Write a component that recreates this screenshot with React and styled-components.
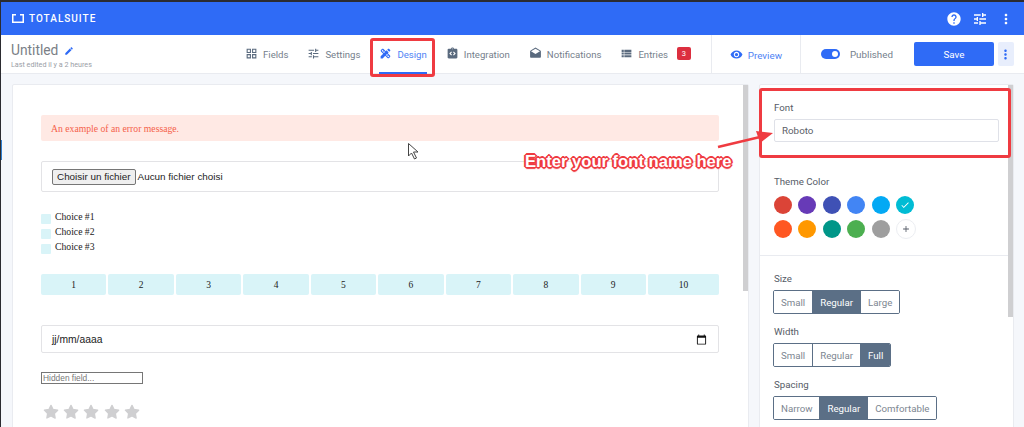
import React from "react";
import styled, { createGlobalStyle } from "styled-components";
import {
  MdOutlineGridView, MdTune, MdDesignServices, MdIntegrationInstructions, MdDrafts,
  MdViewList, MdVisibility, MdEdit, MdHelp, MdMoreVert, MdCheck, MdAdd, MdCalendarToday,
} from "react-icons/md";

const Global = createGlobalStyle`
  html, body { margin: 0; padding: 0; background: #f5f7fa; }
  * { box-sizing: border-box; }
  body { font-family: Roboto, "Liberation Sans", sans-serif; }
`;

const Page = styled.div`
  position: relative; width: 1024px; height: 427px; overflow: hidden;
  display: flex; flex-direction: column; background: #f5f7fb;
  border-top: 2px solid #2b2b30; border-left: 1px solid #2b2b30;
`;
const Header = styled.header`
  height: 33px; flex: none; background: #2f6bf6; color: #fff;
  display: flex; align-items: center; justify-content: space-between; padding: 0 10px 0 11px;
`;
const Logo = styled.div`
  display: flex; align-items: center; gap: 5px; font-size: 10px; font-weight: 500; letter-spacing: 1px;
`;
const HeaderIcons = styled.div`
  display: flex; align-items: center; gap: 10px; font-size: 16px; svg { display: block; }
`;
const Toolbar = styled.div`
  height: 39px; flex: none; background: #fff; border-bottom: 1px solid #e9ebf0; display: flex; align-items: stretch;
`;
const TitleBlock = styled.div`
  width: 244px; padding: 7px 0 0 10px; flex: none;
`;
const Title = styled.div`
  display: flex; align-items: center; gap: 6px; color: #7b7f86; font-size: 13.8px; line-height: 17px;
  svg { color: #2f6bf6; font-size: 10px; }
`;
const Sub = styled.div`
  color: #9a9ea6; font-size: 7.2px; line-height: 9px; margin-top: 1px;
`;
const Tabs = styled.nav`
  display: flex; align-items: stretch; gap: 19px; flex: none;
`;
const Tab = styled.div`
  display: flex; align-items: center; gap: 5px; font-size: 9.6px; height: 39px; padding: 2px 0 0;
  color: ${p => (p.$active ? "#4f83f5" : "#75808c")};
  border-bottom: 2px solid ${p => (p.$active ? "#2f6bf6" : "transparent")};
  svg { font-size: 13px; margin-bottom: 2px; color: ${p => (p.$active ? "#2f6bf6" : "#5a6a7e")}; }
`;
const Badge = styled.span`
  background: #dc2f3f; color: #fff; font-size: 7.5px; width: 14px; height: 13px; border-radius: 2px;
  display: flex; align-items: center; justify-content: center; margin-left: 4px; margin-bottom: 2px;
`;
const PreviewCell = styled.div`
  width: 90px; margin-left: 20px; flex: none; border-left: 1px solid #e9ebf0; border-right: 1px solid #e9ebf0;
  display: flex; align-items: center; justify-content: center; gap: 5px; color: #4f83f5; font-size: 9.8px; padding-top: 2px;
  svg { font-size: 13px; color: #2f6bf6; margin-bottom: 2px; }
`;
const PublishCell = styled.div`
  display: flex; align-items: center; padding-left: 20px; flex: none; gap: 10px; color: #75808c; font-size: 9.8px;
`;
const Toggle = styled.span`
  width: 19px; height: 10px; border-radius: 5px; background: #2f6bf6; position: relative; display: block;
  &::after { content: ""; position: absolute; right: 2px; top: 2px; width: 6px; height: 6px; border-radius: 50%; background: #fff; }
`;
const SaveBtn = styled.div`
  width: 80px; height: 24px; align-self: center; border-radius: 2px; background: #2f6bf6; color: #fff; font-size: 9.8px; margin-left: 21px; flex: none;
  display: flex; align-items: center; justify-content: center;
`;
const MoreBtn = styled.div`
  width: 16px; height: 24px; align-self: center; border-radius: 2px; background: #e8eefc; color: #2f6bf6; margin-left: 4px; flex: none;
  display: flex; align-items: center; justify-content: center; font-size: 15px;
`;
const Workspace = styled.div`
  flex: 1; min-height: 0; display: flex; padding: 10px 11px 0 11px; gap: 10px; align-items: flex-start;
`;
const Canvas = styled.main`
  position: relative; width: 737px; height: 360px; flex: none; background: #fff; border: 1px solid #e9ebf0; border-radius: 2px;
  padding: 30px 0 0 28px; font-family: "Liberation Serif", serif; color: #333;
`;
const ScrollThumb = styled.div`
  position: absolute; top: 0; right: ${p => p.$right}px; width: 5px; height: ${p => p.$h}px; background: #cfcfd1;
`;
const ErrorBox = styled.div`
  width: 678px; height: 26px; background: #ffe9e4; border-radius: 2px; color: #f5614a; font-size: 9.7px;
  display: flex; align-items: center; padding-left: 10px;
`;
const FileBox = styled.div`
  width: 678px; height: 31px; margin-top: 20px; border: 1px solid #e3e3e6; border-radius: 2px; display: flex; align-items: center;
  padding-left: 10px; gap: 2px; font-family: "Liberation Sans", sans-serif; font-size: 9.9px; color: #222;
`;
const FileButton = styled.span`
  border: 1px solid #767676; border-radius: 2px; background: #efefef; padding: 0 4px; height: 16px; display: flex; align-items: center; white-space: nowrap;
`;
const Choices = styled.div`
  margin-top: 18px; display: flex; flex-direction: column;
`;
const Choice = styled.div`
  display: flex; align-items: flex-start; gap: 4px; height: 15px; font-size: 9.7px; color: #222; line-height: 13px;
`;
const Check = styled.span`
  width: 10px; height: 10px; margin-top: 4px; background: #d9f4f8; border-radius: 1px; flex: none;
`;
const Scale = styled.div`
  display: flex; gap: 2px; width: 678px; margin-top: 19px;
`;
const ScaleItem = styled.div`
  flex: 1; height: 21px; background: #d9f4f8; border-radius: 2px; font-size: 9.5px; color: #222;
  display: flex; align-items: center; justify-content: center;
  &:last-child { flex: none; width: 71px; }
`;
const DateBox = styled.div`
  width: 678px; height: 28px; margin-top: 30px; border: 1px solid #e3e3e6; border-radius: 2px; display: flex; align-items: center;
  justify-content: space-between; padding: 0 11px 0 10px; font-family: "Liberation Sans", sans-serif; font-size: 10.3px; color: #222;
  svg { font-size: 11px; color: #111; }
`;
const HiddenField = styled.div`
  width: 102px; height: 12px; margin-top: 19px; border: 1px solid #767676; font-family: "Liberation Sans", sans-serif; font-size: 8.4px;
  color: #777; padding-left: 1px; line-height: 10px;
`;
const Stars = styled.div`
  display: flex; gap: 4.2px; margin-top: 20px; margin-left: 2px; color: #cfcfd1;
  svg { display: block; }
`;
const Sidebar = styled.aside`
  position: relative; width: 255px; height: 360px; flex: none; background: #fff; border: 1px solid #e9ebf0; border-radius: 2px; padding: 17px 14px 0;
  color: #555b66;
`;
const Label = styled.div`
  font-size: 9.7px; line-height: 12px; color: #555b66;
`;
const FontInput = styled.div`
  width: 225px; height: 23px; margin-top: 5px; border: 1px solid #dfe1e8; border-radius: 2px; font-size: 9.8px; color: #5c6068;
  display: flex; align-items: center; padding-left: 7px;
`;
const ThemeSection = styled.div`
  margin-top: 34px;
`;
const Swatches = styled.div`
  display: grid; grid-template-columns: repeat(6, 18px); column-gap: 6.4px; row-gap: 6px; margin-top: 8px;
`;
const Swatch = styled.div`
  width: 18px; height: 18px; border-radius: 50%; background: ${p => p.$c}; color: #fff; font-size: 10px;
  display: flex; align-items: center; justify-content: center;
`;
const AddSwatch = styled(Swatch)`
  width: 20px; height: 20px; margin-top: -1px; background: #fff; border: 1px solid #eceef2; color: #555b66; font-size: 10px;
`;
const Divider = styled.div`
  height: 1px; background: #e9ebf0; margin: 16px -14px 0;
`;
const Group = styled.div`
  margin-top: ${p => p.$mt}px;
`;
const Segments = styled.div`
  display: inline-flex; height: 24px; margin: 5px 0 0 -1px; border: 1px solid #5b6f86; border-radius: 2px; overflow: hidden; vertical-align: top;
`;
const Segment = styled.div`
  display: flex; align-items: center; padding: 0 7px; font-size: 9.7px;
  background: ${p => (p.$on ? "#5b6f86" : "#fff")}; color: ${p => (p.$on ? "#fff" : "#7d8691")};
  & + & { border-left: 1px solid #5b6f86; }
`;
const RedBox = styled.div`
  position: absolute; border: 3px solid #ef3b41; border-radius: 3px; pointer-events: none;
  left: ${p => p.$x}px; top: ${p => p.$y}px; width: ${p => p.$w}px; height: ${p => p.$h}px;
`;
const Callout = styled.div`
  position: absolute; left: 524px; top: 151px; font-family: "Liberation Sans", sans-serif; font-weight: 700; font-size: 16.6px; line-height: 18px; color: #fff; white-space: nowrap;
  text-shadow: -1px -1px 0 #ef3b41, 1px -1px 0 #ef3b41, -1px 1px 0 #ef3b41, 1px 1px 0 #ef3b41, 0 2px 1px #ef3b41, 2px 0 0 #ef3b41, -2px 0 0 #ef3b41, 0 -2px 0 #ef3b41;
`;
const Overlay = styled.svg`
  position: absolute; left: 0; top: 0; pointer-events: none;
`;
const EdgeMark = styled.div`
  position: absolute; left: 0; top: 138px; width: 1px; height: 20px; background: #2f7fd0;
`;

const colors = ["#db4437", "#673ab7", "#3f51b5", "#4285f4", "#03a9f4", "#00bcd4", "#ff5722", "#ff9800", "#009688", "#4caf50", "#9e9e9e"];
const stars = [0, 1, 2, 3, 4];
const nums = [1, 2, 3, 4, 5, 6, 7, 8, 9, 10];

const LogoMark = () => (
  <svg width="12" height="9" viewBox="0 0 12 9"><path d="M0 0h4v1.5H1.5v6h9v-6H8V0h4v9H0z" fill="#fff" /></svg>
);

const StarIcon = () => (
  <svg width="16" height="16" viewBox="0 0 24 24">
    <path
      d="M12 2l3.1 6.3 6.9 1-5 4.9 1.2 6.9L12 17.8 5.8 21l1.2-6.9-5-4.9 6.9-1z"
      fill="currentColor" stroke="currentColor" strokeWidth="2" strokeLinejoin="round"
    />
  </svg>
);

const SegmentGroup = ({ label, mt, items, on }) => (
  <Group $mt={mt}>
    <Label>{label}</Label>
    <Segments>
      {items.map((t) => <Segment key={t} $on={t === on}>{t}</Segment>)}
    </Segments>
  </Group>
);

export default function App() {
  return (
    <Page>
      <Global />
      <Header>
        <Logo><LogoMark />TOTALSUITE</Logo>
        <HeaderIcons><MdHelp /><MdTune /><MdMoreVert /></HeaderIcons>
      </Header>
      <Toolbar>
        <TitleBlock>
          <Title>Untitled <MdEdit /></Title>
          <Sub>Last edited il y a 2 heures</Sub>
        </TitleBlock>
        <Tabs>
          <Tab><MdOutlineGridView />Fields</Tab>
          <Tab><MdTune />Settings</Tab>
          <Tab $active><MdDesignServices />Design</Tab>
          <Tab><MdIntegrationInstructions />Integration</Tab>
          <Tab><MdDrafts />Notifications</Tab>
          <Tab><MdViewList />Entries<Badge>3</Badge></Tab>
        </Tabs>
        <PreviewCell><MdVisibility />Preview</PreviewCell>
        <PublishCell><Toggle />Published</PublishCell>
        <SaveBtn>Save</SaveBtn>
        <MoreBtn><MdMoreVert /></MoreBtn>
      </Toolbar>
      <Workspace>
        <Canvas>
          <ScrollThumb $right={0} $h={206} />
          <ErrorBox>An example of an error message.</ErrorBox>
          <FileBox><FileButton>Choisir un fichier</FileButton> Aucun fichier choisi</FileBox>
          <Choices>
            {[1, 2, 3].map((n) => <Choice key={n}><Check />Choice #{n}</Choice>)}
          </Choices>
          <Scale>{nums.map((n) => <ScaleItem key={n}>{n}</ScaleItem>)}</Scale>
          <DateBox>jj/mm/aaaa<MdCalendarToday /></DateBox>
          <HiddenField>Hidden field...</HiddenField>
          <Stars>{stars.map((s) => <StarIcon key={s} />)}</Stars>
        </Canvas>
        <Sidebar>
          <ScrollThumb $right={0} $h={232} />
          <Label>Font</Label>
          <FontInput>Roboto</FontInput>
          <ThemeSection>
            <Label>Theme Color</Label>
            <Swatches>
              {colors.map((c, i) => <Swatch key={c} $c={c}>{i === 5 ? <MdCheck /> : null}</Swatch>)}
              <AddSwatch $c="#fff"><MdAdd /></AddSwatch>
            </Swatches>
          </ThemeSection>
          <Divider />
          <SegmentGroup label="Size" mt={17} items={["Small", "Regular", "Large"]} on="Regular" />
          <SegmentGroup label="Width" mt={12} items={["Small", "Regular", "Full"]} on="Full" />
          <SegmentGroup label="Spacing" mt={12} items={["Narrow", "Regular", "Comfortable"]} on="Regular" />
        </Sidebar>
      </Workspace>
      <EdgeMark />
      <RedBox $x={369} $y={36} $w={65} $h={39} />
      <RedBox $x={758} $y={86} $w={252} $h={70} />
      <Overlay width="1024" height="427" viewBox="0 0 1024 427">
        <path d="M717 145 L759 135" stroke="#ef3b41" strokeWidth="2.5" />
        <path d="M772 131 L755 129 L759 141 Z" fill="#ef3b41" />
        <path d="M407.5 141.5 L407.5 154 L410.5 151 L413.5 157 L415.5 156 L412.5 150 L417 150 Z" fill="#fff" stroke="#444" strokeWidth="1" />
      </Overlay>
      <Callout>Enter your font name here</Callout>
    </Page>
  );
}
